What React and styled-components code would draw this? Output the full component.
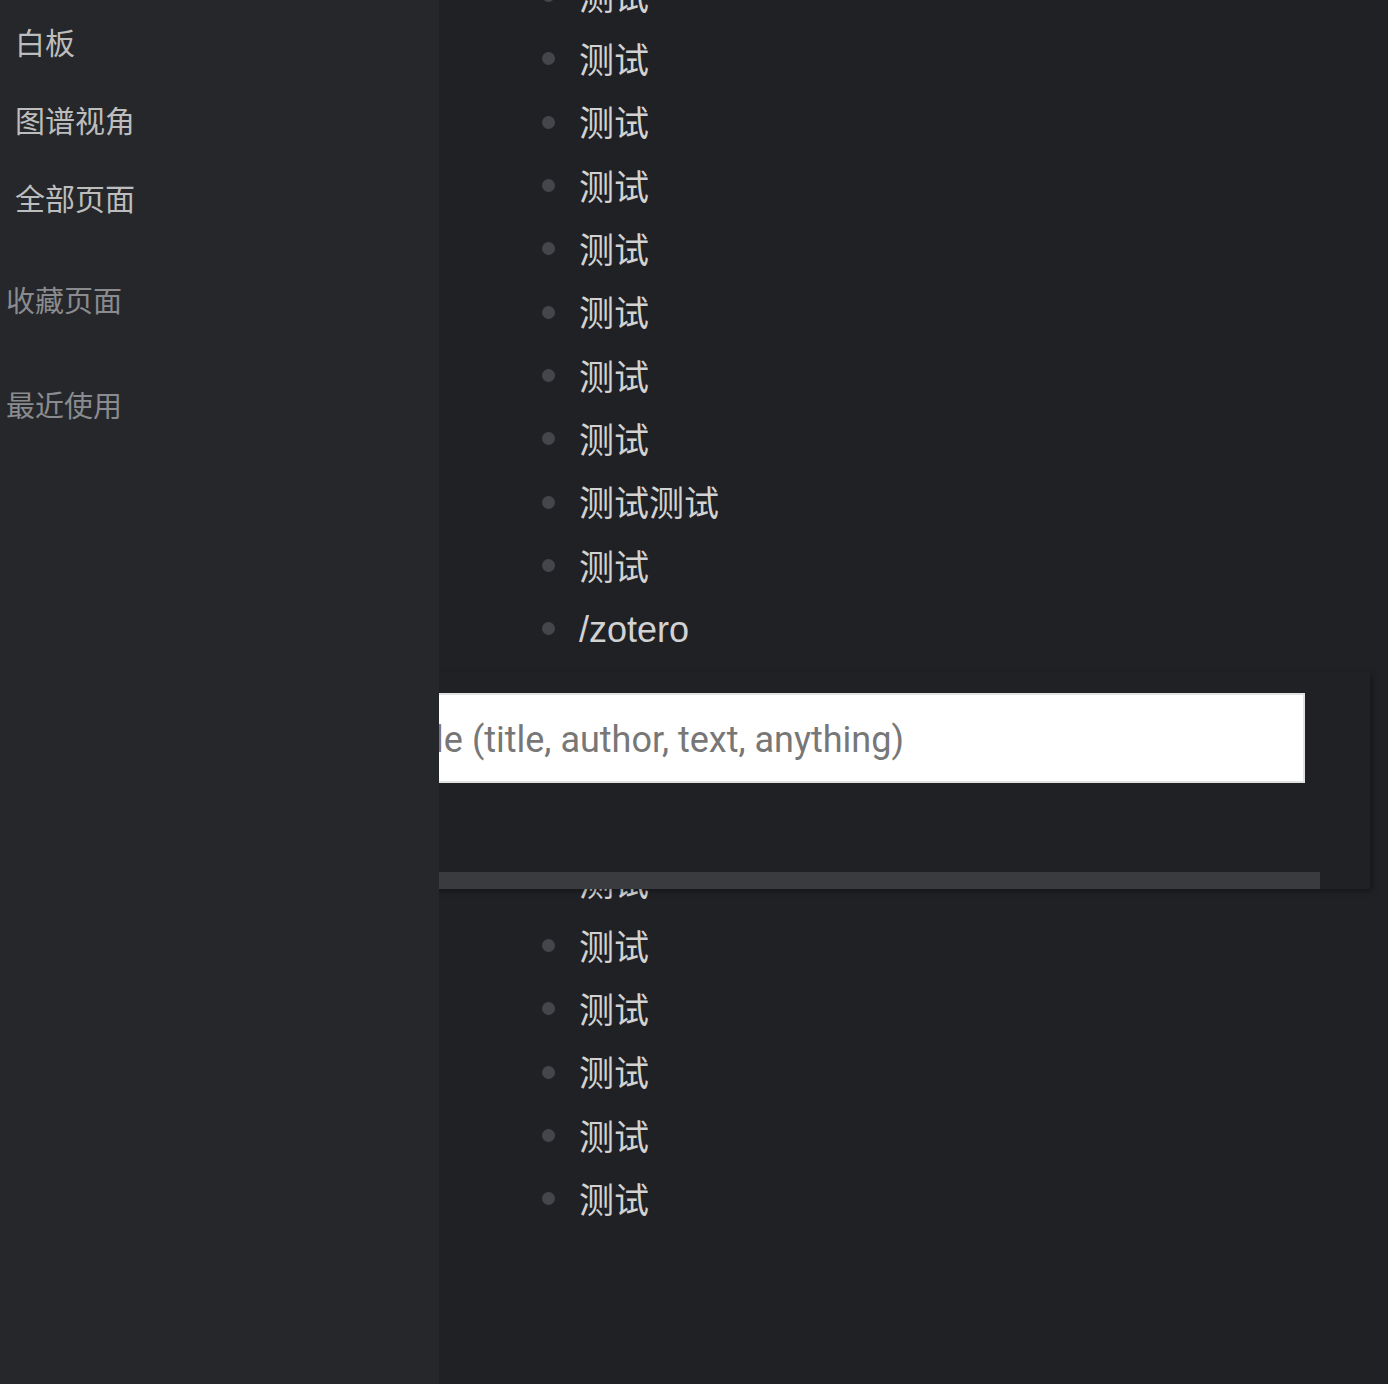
import React from 'react';
import styled, { createGlobalStyle } from 'styled-components';

const GlobalStyle = createGlobalStyle`
  html, body {
    margin: 0;
    padding: 0;
    background: #202125;
    overflow: hidden;
  }
  body {
    font-family: "Noto Sans CJK SC", "Noto Sans", sans-serif;
  }
`;

const Page = styled.div`
  position: relative;
  display: flex;
  width: 1388px;
  height: 1384px;
  overflow: hidden;
  background: #202125;
`;

const Sidebar = styled.aside`
  position: relative;
  z-index: 2;
  flex: 0 0 439px;
  background: #26272b;
  display: flex;
  flex-direction: column;
  padding-top: 18px;
`;

const NavItem = styled.div`
  font-size: 30px;
  line-height: 46px;
  color: #bdbdbd;
  padding-left: 15px;
  margin-bottom: 32px;
`;

const SectionTitle = styled.div`
  font-size: 29px;
  line-height: 46px;
  color: #8a8b8e;
  padding-left: 6px;
  margin-top: ${({ first }) => (first ? '24px' : '59px')};
`;

const Main = styled.main`
  flex: 1;
  position: relative;
`;

// list is scrolled: first row sits partly above the viewport
const List = styled.ul`
  list-style: none;
  margin: -36px 0 0;
  padding: 0 0 0 103px;
`;

const Row = styled.li`
  display: flex;
  align-items: center;
  height: 63.33px;
  gap: 24px;
`;

const Bullet = styled.span`
  width: 13px;
  height: 13px;
  border-radius: 50%;
  background: #45464b;
  flex: 0 0 13px;
`;

const ItemText = styled.span`
  font-family: ${({ latin }) => (latin ? '"Liberation Sans", Arial, sans-serif' : '"Noto Sans CJK SC", sans-serif')};
  font-size: ${({ latin }) => (latin ? '36px' : '35px')};
  line-height: 1;
  margin-top: ${({ latin }) => (latin ? '3px' : '-3px')};
  color: #d2d2d2;
`;

const Popup = styled.div`
  position: absolute;
  z-index: 1;
  left: 0;
  top: 672px;
  width: 1370px;
  height: 217px;
  background: #202125;
  box-shadow: 2px 2px 6px rgba(0, 0, 0, 0.35);
  display: flex;
  flex-direction: column;
  padding-top: 21px;
  box-sizing: border-box;
`;

const SearchInput = styled.input`
  width: 1305px;
  height: 90px;
  box-sizing: border-box;
  border: 2px solid #e2e2e2;
  border-left: none;
  background: #fff;
  outline: none;
  font-family: Roboto, "Noto Sans", sans-serif;
  font-size: 36px;
  padding: 3px 0 0 141px;
  color: #333;
  &::placeholder {
    color: #777;
  }
`;

const ScrollBar = styled.div`
  margin-top: 89px;
  width: 1320px;
  height: 17px;
  background: #3a3b3e;
`;

const items = [
  '测试', '测试', '测试', '测试', '测试', '测试', '测试', '测试', '测试测试', '测试',
  '/zotero', '测试', '测试', '测试', '测试', '测试', '测试', '测试', '测试', '测试',
];

export default function App() {
  return (
    <>
      <GlobalStyle />
      <Page>
        <Sidebar>
          <NavItem>白板</NavItem>
          <NavItem>图谱视角</NavItem>
          <NavItem>全部页面</NavItem>
          <SectionTitle first>收藏页面</SectionTitle>
          <SectionTitle>最近使用</SectionTitle>
        </Sidebar>
        <Main>
          <List>
            {items.map((text, i) => (
              <Row key={i}>
                <Bullet />
                <ItemText latin={text.startsWith('/')}>{text}</ItemText>
              </Row>
            ))}
          </List>
        </Main>
        <Popup>
          <SearchInput placeholder="Search for an article (title, author, text, anything)" readOnly />
          <ScrollBar />
        </Popup>
      </Page>
    </>
  );
}
